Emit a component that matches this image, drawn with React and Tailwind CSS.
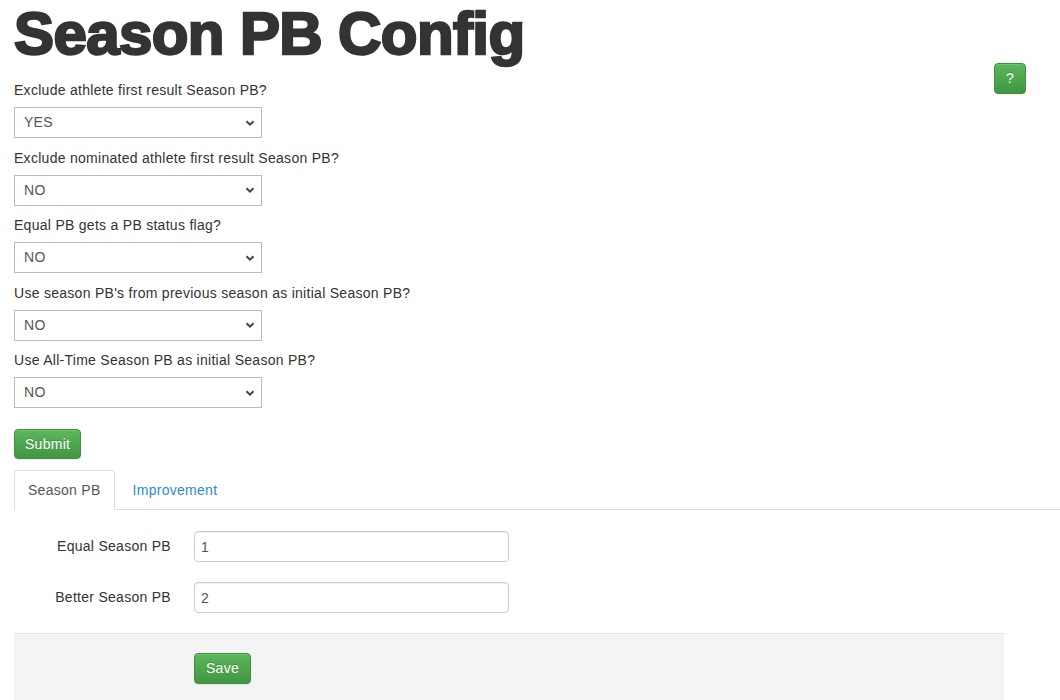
import React, { useState } from 'react';

const font = { fontFamily: '"Liberation Sans", Arial, Helvetica, sans-serif', letterSpacing: '0.28px' };

const questions = [
  { label: 'Exclude athlete first result Season PB?', value: 'YES' },
  { label: 'Exclude nominated athlete first result Season PB?', value: 'NO' },
  { label: 'Equal PB gets a PB status flag?', value: 'NO' },
  { label: "Use season PB's from previous season as initial Season PB?", value: 'NO' },
  { label: 'Use All-Time Season PB as initial Season PB?', value: 'NO' },
];

const greenBtn =
  'text-white text-[14px] rounded-[4px] border border-[#3e8f3e] bg-gradient-to-b from-[#5cb85c] to-[#419641] shadow-[inset_0_1px_0_rgba(255,255,255,0.15),0_1px_1px_rgba(0,0,0,0.075)] [text-shadow:0_-1px_0_rgba(0,0,0,0.2)]';

const Chevron = () => (
  <svg className="pointer-events-none absolute right-[6px] top-1/2 -translate-y-1/2" width="12" height="12" viewBox="0 0 12 12">
    <path d="M2.5 4.2 L6 7.6 L9.5 4.2" fill="none" stroke="#444" strokeWidth="2" />
  </svg>
);

const YesNo = ({ label, value }) => {
  const [val, setVal] = useState(value);
  return (
    <div className="mb-[9.5px]">
      <label className="block leading-[20px] mb-[7px] text-[#333]">{label}</label>
      <div className="relative w-[248px]">
        <select
          value={val}
          onChange={(e) => setVal(e.target.value)}
          className="appearance-none w-full h-[31px] pl-[9px] border border-[#bbb] bg-white text-[#555] text-[14px] outline-none"
          style={font}
        >
          <option value="YES">YES</option>
          <option value="NO">NO</option>
        </select>
        <Chevron />
      </div>
    </div>
  );
};

const PointsRow = ({ label, value }) => (
  <div className="flex items-center mb-[20px]">
    <label className="w-[157px] text-right text-[#333]">{label}</label>
    <input
      defaultValue={value}
      className="ml-[23px] w-[315px] h-[31px] px-[6px] border border-[#ccc] rounded-[4px] text-[#555] text-[14px] shadow-[inset_0_1px_1px_rgba(0,0,0,0.075)] outline-none"
      style={font}
    />
  </div>
);

export default function App() {
  const [tab, setTab] = useState('season');

  return (
    <div className="relative min-h-[700px] bg-white pl-[14px] text-[14px] text-[#333] overflow-hidden" style={font}>
      <h1
        className="mt-[1px] mb-[13px] text-[60px] leading-[66px] font-bold text-[#333] [-webkit-text-stroke:2.4px_#333]"
        style={{ ...font, letterSpacing: '-0.6px' }}
      >
        Season PB Config
      </h1>

      <button className={`absolute right-[34px] top-[63px] w-[32px] h-[31px] ${greenBtn}`} style={font}>
        ?
      </button>

      {questions.map((q) => (
        <YesNo key={q.label} label={q.label} value={q.value} />
      ))}

      <button className={`mt-[11.5px] h-[30px] px-[10px] ${greenBtn}`} style={font}>
        Submit
      </button>

      <div className="mt-[11px] flex border-b border-[#ddd]">
        <button
          onClick={() => setTab('season')}
          className={`h-[40px] px-[13px] -mb-px rounded-t-[4px] border ${
            tab === 'season' ? 'border-[#ddd] border-b-white bg-white text-[#555]' : 'border-transparent text-[#2a8bd5]'
          }`}
          style={font}
        >
          Season PB
        </button>
        <button
          onClick={() => setTab('improvement')}
          className={`h-[40px] ml-[2px] px-[15px] -mb-px rounded-t-[4px] border ${
            tab === 'improvement' ? 'border-[#ddd] border-b-white bg-white text-[#555]' : 'border-transparent text-[#2a8bd5]'
          }`}
          style={font}
        >
          Improvement
        </button>
      </div>

      <div className="pt-[21px]">
        {tab === 'season' ? (
          <>
            <PointsRow label="Equal Season PB" value="1" />
            <PointsRow label="Better Season PB" value="2" />
          </>
        ) : (
          <>
            <PointsRow label="Equal Improvement" value="1" />
            <PointsRow label="Better Improvement" value="2" />
          </>
        )}
      </div>

      <div className="mt-[2px] w-[990px] h-[80px] bg-[#f4f4f4] border-t border-[#e5e5e5] pt-[19px] pl-[180px]">
        <button className={`h-[31px] px-[11px] ${greenBtn}`} style={font}>
          Save
        </button>
      </div>
    </div>
  );
}
